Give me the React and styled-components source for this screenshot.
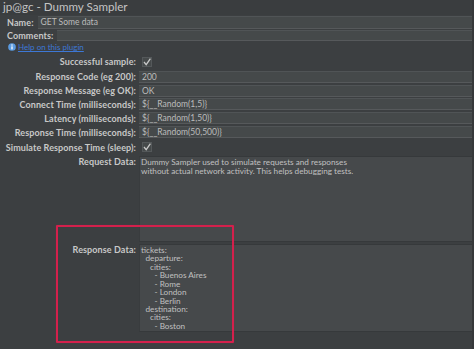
import React from "react";
import styled, { createGlobalStyle } from "styled-components";

const Global = createGlobalStyle`
  html, body {
    margin: 0;
    padding: 0;
    background: #3c3f41;
  }
  body {
    font-family: Lato, "Liberation Sans", sans-serif;
    color: #bbbbbb;
  }
`;

const fields = [
  { label: "Response Code (eg 200):", value: "200" },
  { label: "Response Message (eg OK):", value: "OK" },
  { label: "Connect Time (milliseconds):", value: "${__Random(1,5)}" },
  { label: "Latency (milliseconds):", value: "${__Random(1,50)}" },
  { label: "Response Time (milliseconds):", value: "${__Random(50,500)}" },
];

const responseLines = [
  { text: "tickets:", indent: 0 },
  { text: "departure:", indent: 1 },
  { text: "cities:", indent: 2 },
  { text: "- Buenos Aires", indent: 3 },
  { text: "- Rome", indent: 3 },
  { text: "- London", indent: 3 },
  { text: "- Berlin", indent: 3 },
  { text: "destination:", indent: 1 },
  { text: "cities:", indent: 2 },
  { text: "- Boston", indent: 3 },
];

function Check() {
  return (
    <CheckBox>
      <svg width="10" height="10" viewBox="0 0 10 10">
        <rect x="0.5" y="0.5" width="9" height="9" fill="#45494a" stroke="#54585a" />
        <path d="M2 5 L4.2 7.6 L8.4 1.6" fill="none" stroke="#c8c8c8" strokeWidth="1.3" />
      </svg>
    </CheckBox>
  );
}

export default function App() {
  return (
    <Page>
      <Global />
      <Title>jp@gc - Dummy Sampler</Title>
      <TopRow $h={14}>
        <TopLabel>Name:</TopLabel>
        <Field $h={13}>GET Some data</Field>
      </TopRow>
      <TopRow $h={12}>
        <TopLabel>Comments:</TopLabel>
        <Field $h={11} />
      </TopRow>
      <HelpRow>
        <svg width="8" height="8" viewBox="0 0 10 10">
          <circle cx="5" cy="5" r="4.8" fill="#5b9be0" />
          <rect x="4.2" y="4.2" width="1.6" height="3.8" fill="#fff" />
          <circle cx="5" cy="2.6" r="0.9" fill="#fff" />
        </svg>
        <HelpLink>Help on this plugin</HelpLink>
      </HelpRow>
      <Form>
        <Label $h={17}>Successful sample:</Label>
        <Cell $h={17}>
          <Check />
        </Cell>
        {fields.map((f) => (
          <React.Fragment key={f.label}>
            <Label $h={13.8}>{f.label}</Label>
            <Cell $h={13.8}>
              <Field $h={12}>{f.value}</Field>
            </Cell>
          </React.Fragment>
        ))}
        <Label $h={17}>Simulate Response Time (sleep):</Label>
        <Cell $h={17}>
          <Check />
        </Cell>
        <AreaLabel>Request Data:</AreaLabel>
        <TextArea $h={86} $lh={9}>
          Dummy Sampler used to simulate requests and responses
          <br />
          without actual network activity. This helps debugging tests.
        </TextArea>
        <Spacer />
        <Spacer />
        <AreaLabel>Response Data:</AreaLabel>
        <TextArea $h={88} $lh={8.45}>
          {responseLines.map((l, i) => (
            <Line key={i} $indent={l.indent}>
              {l.text}
            </Line>
          ))}
        </TextArea>
      </Form>
      <Highlight />
    </Page>
  );
}

const Page = styled.div`
  position: relative;
  width: 474px;
  height: 349px;
  overflow: hidden;
  background: #3c3f41;
  border-right: 2px solid #36383a;
  box-sizing: border-box;
`;

const Title = styled.div`
  height: 15px;
  padding-left: 3px;
  font-size: 11.6px;
  line-height: 14px;
  color: #c4c4c4;
  background: #3a3d3f;
`;

const TopRow = styled.div`
  display: flex;
  align-items: center;
  padding-left: 7px;
  height: ${(p) => p.$h}px;
`;

const TopLabel = styled.div`
  font-size: 9px;
  font-weight: bold;
  letter-spacing: 0.1px;
  color: #c8c8c8;
  padding-right: 4px;
  white-space: nowrap;
`;

const Field = styled.div`
  flex: 1;
  height: ${(p) => p.$h}px;
  box-sizing: border-box;
  background: #45494a;
  border-top: 1px solid #505456;
  border-bottom: 1px solid #56595b;
  font-size: 8.5px;
  line-height: ${(p) => p.$h - 2}px;
  padding-left: 3px;
  color: #bcbcbc;
  white-space: nowrap;
`;

const HelpRow = styled.div`
  display: flex;
  align-items: center;
  gap: 2px;
  height: 12px;
  padding-left: 8px;
`;

const HelpLink = styled.span`
  font-size: 8px;
  color: #3d78d6;
  text-decoration: underline;
`;

const Form = styled.div`
  display: grid;
  grid-template-columns: 139px 1fr;
`;

const Label = styled.div`
  height: ${(p) => p.$h}px;
  display: flex;
  align-items: center;
  justify-content: flex-end;
  padding-right: 3px;
  font-size: 9px;
  font-weight: bold;
  letter-spacing: 0.1px;
  color: #c8c8c8;
  white-space: nowrap;
`;

const Cell = styled.div`
  height: ${(p) => p.$h}px;
  display: flex;
  align-items: center;
`;

const CheckBox = styled.div`
  width: 10px;
  height: 10px;
  margin-left: 3px;
  display: flex;
  align-items: center;
  justify-content: center;
`;

const AreaLabel = styled.div`
  text-align: right;
  padding-right: 3px;
  padding-top: 1px;
  font-size: 9px;
  line-height: 9px;
  font-weight: bold;
  letter-spacing: 0.1px;
  color: #c8c8c8;
  white-space: nowrap;
`;

const TextArea = styled.div`
  height: ${(p) => p.$h}px;
  box-sizing: border-box;
  background: #46494b;
  border-left: 1px solid #393c3e;
  border-top: 1px solid #36393b;
  border-bottom: 1px solid #36393b;
  padding: 1px 0 0 1px;
  font-size: 8.2px;
  line-height: ${(p) => p.$lh}px;
  color: #c0c0c0;
`;

const Line = styled.div`
  height: 8.45px;
  padding-left: ${(p) => p.$indent * 4.5}px;
`;

const Spacer = styled.div`
  height: 2px;
`;

const Highlight = styled.div`
  position: absolute;
  left: 56px;
  top: 225px;
  width: 178px;
  height: 118px;
  box-sizing: border-box;
  border: 2px solid #d4204c;
  border-radius: 1px;
  box-shadow: 0 0 1px rgba(212, 32, 76, 0.6);
`;
